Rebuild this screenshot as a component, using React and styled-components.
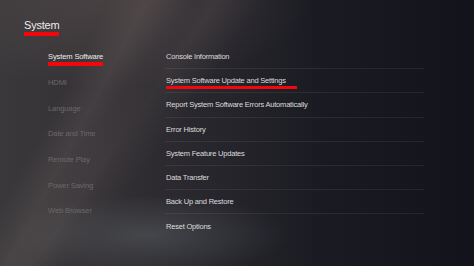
import styled, { createGlobalStyle } from "styled-components";

const sideItems = [
    "System Software",
    "HDMI",
    "Language",
    "Date and Time",
    "Remote Play",
    "Power Saving",
    "Web Browser",
];

const options = [
    "Console Information",
    "System Software Update and Settings",
    "Report System Software Errors Automatically",
    "Error History",
    "System Feature Updates",
    "Data Transfer",
    "Back Up and Restore",
    "Reset Options",
];

export default function App() {
    return (
        <>
            <GlobalStyle />
            <Screen>
                <Header>
                    <Title>System</Title>
                </Header>
                <Body>
                    <SideMenu>
                        {sideItems.map((item, i) => (
                            <SideItem key={item}>
                                <SideLabel $active={i === 0}>{item}</SideLabel>
                            </SideItem>
                        ))}
                    </SideMenu>
                    <OptionList>
                        {options.map((item, i) => (
                            <OptionRow key={item}>
                                <OptionLabel $marked={i === 1}>{item}</OptionLabel>
                            </OptionRow>
                        ))}
                    </OptionList>
                </Body>
            </Screen>
        </>
    );
}

const GlobalStyle = createGlobalStyle`
    html, body {
        margin: 0;
        padding: 0;
        background: #15161e;
    }
    body {
        font-family: "Liberation Sans", Arial, sans-serif;
    }
`

const Screen = styled.div`
    width: 474px;
    height: 266px;
    overflow: hidden;
    display: flex;
    flex-direction: column;
    background:
        linear-gradient(118deg, transparent 18%, rgba(150, 135, 130, 0.16) 24%, transparent 32%),
        linear-gradient(125deg, transparent 28%, rgba(140, 125, 120, 0.10) 33%, transparent 40%),
        radial-gradient(ellipse 140px 40px at 150px 235px, rgba(95, 102, 106, 0.45), transparent),
        radial-gradient(ellipse 200px 90px at 110px 0px, rgba(110, 96, 92, 0.35), transparent),
        linear-gradient(90deg, #3a383b 0%, #333034 22%, #27262c 45%, #1a1b22 68%, #12131b 100%);
`

const Header = styled.header`
    display: flex;
    align-items: flex-start;
    padding: 20px 0 0 24px;
    height: 25px;
`

const Title = styled.h1`
    margin: 0;
    font-size: 11px;
    font-weight: 400;
    line-height: 11px;
    letter-spacing: -0.2px;
    color: #ececec;
    padding-bottom: 1px;
    border-bottom: 4px solid #f2080c;
`

const Body = styled.main`
    display: grid;
    grid-template-columns: 117px 259px;
    padding-left: 48px;
`

const SideMenu = styled.ul`
    list-style: none;
    margin: -1px 0 0;
    padding: 0;
`

const SideItem = styled.li`
    height: 25.7px;
    display: flex;
    align-items: center;
`

const SideLabel = styled.span`
    font-size: 7.6px;
    letter-spacing: -0.15px;
    line-height: 9px;
    color: ${p => (p.$active ? "#ececec" : "#6c6869")};
    padding: 5px 0 1px;
    border-bottom: 4px solid ${p => (p.$active ? "#f2080c" : "transparent")};
`

const OptionList = styled.ul`
    list-style: none;
    margin: 0;
    padding: 0;
`

const OptionRow = styled.li`
    height: 24.2px;
    display: flex;
    align-items: center;
    padding-left: 1px;
    box-sizing: border-box;

    &:not(:last-child) {
        border-bottom: 1px solid rgba(255, 255, 255, 0.07);
    }
`

const OptionLabel = styled.span`
    font-size: 7.5px;
    letter-spacing: -0.2px;
    line-height: 9px;
    color: #dcdcdc;
    padding: 4px ${p => (p.$marked ? "11px" : "0")} 1px 0;
    border-bottom: 3px solid ${p => (p.$marked ? "#f2080c" : "transparent")};
`
